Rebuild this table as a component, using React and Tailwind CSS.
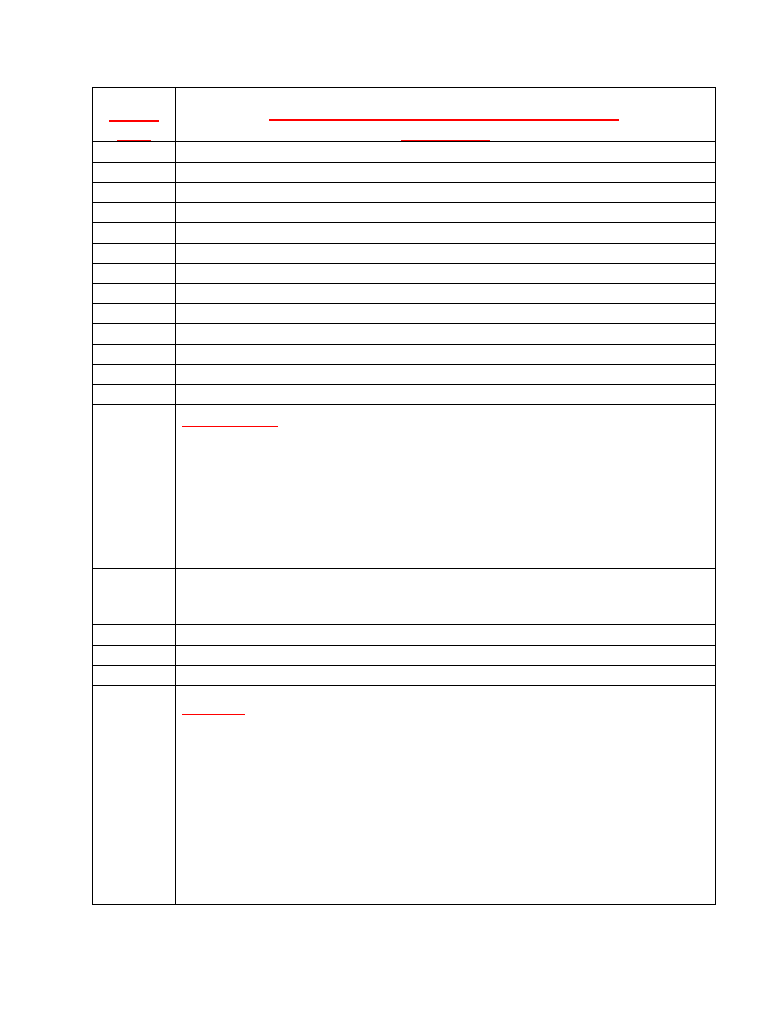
import React from 'react';

// plain two-column form table; headings are only red underlines
const Row = ({ h, last, left, right }) => (
  <div className={`flex ${h} ${last ? '' : 'border-b border-black'}`}>
    <div className="w-[83px] shrink-0 border-r border-black">{left}</div>
    <div className="flex-1">{right}</div>
  </div>
);

const RedLine = ({ className }) => <div className={`bg-[#ff0000] ${className}`} />;

const App = () => {
  const thin = ['h-[21px]', 'h-[20px]', 'h-[20px]', 'h-[20px]', 'h-[21px]', 'h-[20px]', 'h-[20px]', 'h-[20px]', 'h-[20px]', 'h-[21px]', 'h-[20px]', 'h-[20px]', 'h-[20px]'];

  return (
    <div className="min-h-screen bg-white pt-[87px] pl-[92px]">
      <div className="w-[624px] border border-black flex flex-col">

        {/* Header */}
        <Row
          h="h-[54px]"
          left={
            <div className="flex flex-col items-center pt-[32px]">
              <RedLine className="w-[50px] h-[2px]" />
              <RedLine className="w-[34px] h-px mt-[18px]" />
            </div>
          }
          right={
            <div className="flex flex-col items-start pt-[31px]">
              <RedLine className="ml-[93px] w-[350px] h-[2px]" />
              <RedLine className="ml-[225px] w-[89px] h-px mt-[19px]" />
            </div>
          }
        />

        {thin.map((h, i) => (
          <Row key={i} h={h} />
        ))}

        <Row
          h="h-[164px]"
          right={<RedLine className="ml-[6px] mt-[21px] w-[96px] h-px" />}
        />
        <Row h="h-[56px]" />
        <Row h="h-[21px]" />
        <Row h="h-[20px]" />
        <Row h="h-[20px]" />
        <Row
          h="h-[218px]"
          last
          right={<RedLine className="ml-[6px] mt-[28px] w-[63px] h-px" />}
        />
      </div>
    </div>
  );
};

export default App;
